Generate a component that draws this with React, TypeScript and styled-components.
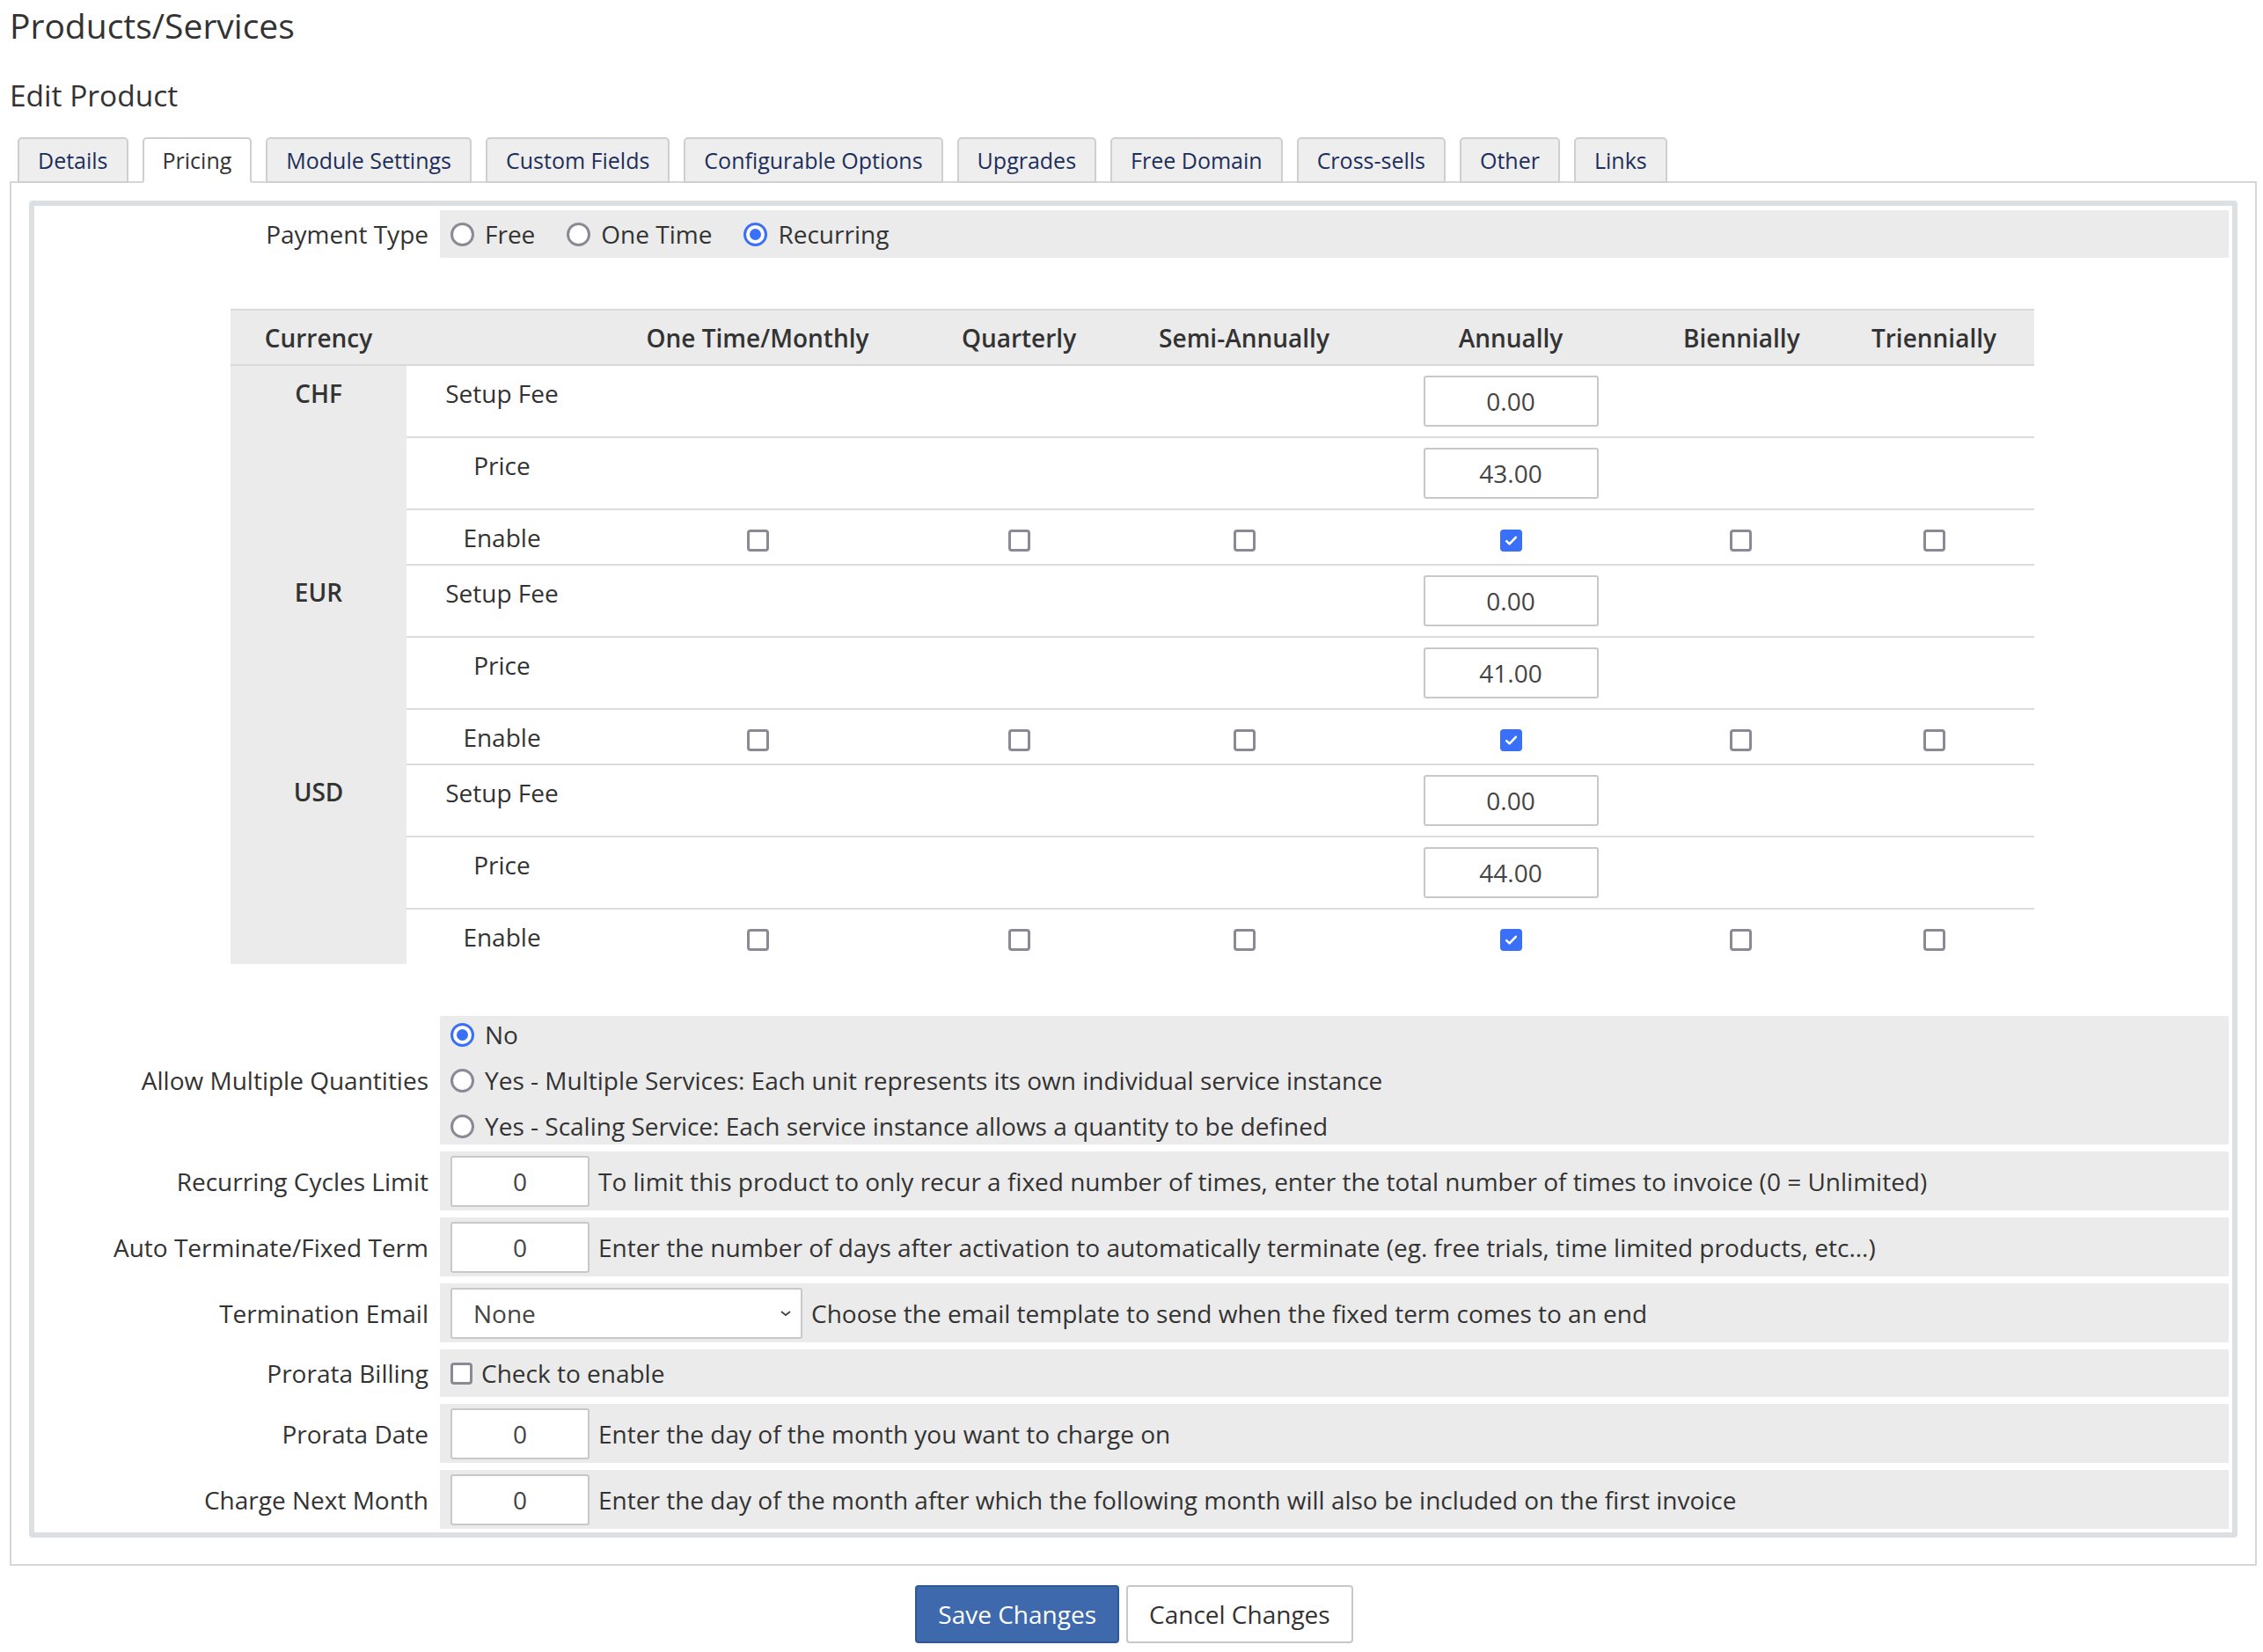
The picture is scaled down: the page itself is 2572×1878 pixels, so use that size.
import React from "react";
import styled, { createGlobalStyle } from "styled-components";

const Global = createGlobalStyle`
  body { margin: 0; background: #fff; font-family: "Open Sans", "Noto Sans", sans-serif; color: #333; }
  * { box-sizing: border-box; }
`;

const Page = styled.div`padding: 0 9px 0 11px; width: 2572px;`;
const H1 = styled.h1`font-weight: 400; font-size: 39px; margin: 0; padding-top: 1px; height: 60px; line-height: 56px; color: #333;`;
const H2 = styled.h2`font-weight: 400; font-size: 33.5px; margin: 0; margin-top: 20px; height: 76px; line-height: 56px; color: #333;`;

const Tabs = styled.div`display: flex; gap: 16px; padding-left: 9px; height: 52px; position: relative; z-index: 1;`;
const Tab = styled.div<{ $active?: boolean }>`
  height: 52px; padding: 0 21px; display: flex; align-items: center;
  font-size: 25px; color: ${p => (p.$active ? "#333" : "#1d2e5c")};
  background: ${p => (p.$active ? "#fff" : "#eeeeee")};
  border: 2px solid #cfcfcf; border-bottom: ${p => (p.$active ? "2px solid #fff" : "2px solid #cfcfcf")};
  border-radius: 5px 5px 0 0;
`;

const Outer = styled.div`border: 2px solid #d6d6d6; margin-top: -2px; padding: 20px 20px 30px 20px; width: 2554px;`;
const Inner = styled.div`border: 6px solid #dde0e3; border-radius: 4px; padding: 5px 4px 4px 2px;`;

const FormRow = styled.div<{ $h?: number; $mt?: number }>`
  display: flex; align-items: stretch; margin-top: ${p => p.$mt ?? 8}px; min-height: ${p => p.$h ?? 67}px;
`;
const Label = styled.div`width: 459px; flex: none; text-align: right; padding-right: 13px; font-size: 28px; display: flex; align-items: center; justify-content: flex-end; color: #333;`;
const Field = styled.div<{ $col?: boolean }>`
  flex: 1; background: #ebebeb; display: flex; ${p => (p.$col ? "flex-direction: column; justify-content: center; gap: 0;" : "align-items: center;")}
  padding: 0 12px; font-size: 28px; gap: 10px; color: #333;
`;
const Opt = styled.label`display: inline-flex; align-items: center; gap: 12px; margin-right: 26px; height: 42px;`;
const Radio = styled.span<{ $on?: boolean }>`
  width: 27px; height: 27px; border-radius: 50%; flex: none;
  border: 3px solid ${p => (p.$on ? "#3a6ff7" : "#8a8a94")};
  background: #fff; position: relative;
  &::after { content: ""; display: ${p => (p.$on ? "block" : "none")}; position: absolute; inset: 4px; border-radius: 50%; background: #3a6ff7; }
`;
const Check = styled.span<{ $on?: boolean }>`
  display: inline-flex; width: 25px; height: 25px; border-radius: 4px; flex: none; align-items: center; justify-content: center; vertical-align: middle;
  border: 3px solid ${p => (p.$on ? "#3a6ff7" : "#8a8a94")}; background: ${p => (p.$on ? "#3a6ff7" : "#fff")};
`;

const Spacer = styled.div<{ $h: number }>`height: ${p => p.$h}px;`;

const Table = styled.table`margin-left: 221px; width: 2050px; border-collapse: collapse; table-layout: fixed; font-size: 28px; color: #333;`;
const Th = styled.th<{ $pl?: number; $pr?: number }>`background: #ebebeb; font-weight: 600; height: 63px; border-top: 2px solid #d9d9d9; border-bottom: 2px solid #d9d9d9; text-align: center; padding: 0 ${p => p.$pr ?? 0}px 0 ${p => p.$pl ?? 0}px; white-space: nowrap;`;
const Cur = styled.td`background: #ebebeb; font-weight: 600; text-align: center; vertical-align: top; padding-top: 12px;`;
const Td = styled.td<{ $h: number; $last?: boolean; $pl?: number; $pr?: number }>`
  height: ${p => p.$h}px; text-align: center; vertical-align: middle;
  padding: 0 ${p => p.$pr ?? 0}px 0 ${p => p.$pl ?? 0}px;
  border-bottom: ${p => (p.$last ? "none" : "2px solid #dcdcdc")};
`;
const RowLabel = styled(Td)`vertical-align: top; padding-top: 12px; padding-right: 34px;`;
const EnLabel = styled(Td)`padding-right: 34px;`;
const Num = styled.div<{ $w?: number }>`
  display: inline-flex; align-items: center; justify-content: center; width: ${p => p.$w ?? 199}px; height: 58px;
  border: 2px solid #c8c8c8; border-radius: 3px; background: #fff; font-size: 28px; color: #444;
`;
const SelectBox = styled.div`
  width: 400px; height: 58px; border: 2px solid #c8c8c8; border-radius: 3px; background: #fff; flex: none;
  display: flex; align-items: center; justify-content: space-between; padding: 0 10px 0 24px; color: #444;
`;
const Buttons = styled.div`display: flex; justify-content: center; gap: 8px; margin-top: 22px; padding-left: 4px;`;
const Btn = styled.button<{ $primary?: boolean }>`
  height: 66px; padding: 0 24px; font-family: inherit; font-size: 28px; border-radius: 4px;
  background: ${p => (p.$primary ? "#3e6aad" : "#fff")}; color: ${p => (p.$primary ? "#fff" : "#333")};
  border: 2px solid ${p => (p.$primary ? "#2f5895" : "#c8c8c8")};
`;

const Tick = () => (
  <svg width="17" height="17" viewBox="0 0 16 16"><path d="M3 8.5l3.2 3.2L13 4.5" fill="none" stroke="#fff" strokeWidth="2.4" strokeLinecap="round" strokeLinejoin="round" /></svg>
);

const cols = [
  { t: "One Time/Monthly", w: 296, pl: 0, pr: 0 },
  { t: "Quarterly", w: 298, pl: 0, pr: 0 },
  { t: "Semi-Annually", w: 214, pl: 0, pr: 0 },
  { t: "Annually", w: 392, pl: 0, pr: 0 },
  { t: "Biennially", w: 157, pl: 0, pr: 26 },
  { t: "Triennially", w: 242, pl: 14, pr: 0 },
];
const data = [
  { c: "CHF", p: "43.00" },
  { c: "EUR", p: "41.00" },
  { c: "USD", p: "44.00" },
];

export default function App() {
  return (
    <Page>
      <Global />
      <H1>Products/Services</H1>
      <H2>Edit Product</H2>
      <Tabs>
        {["Details", "Pricing", "Module Settings", "Custom Fields", "Configurable Options", "Upgrades", "Free Domain", "Cross-sells", "Other", "Links"].map(t => (
          <Tab key={t} $active={t === "Pricing"}>{t}</Tab>
        ))}
      </Tabs>
      <Outer>
        <Inner>
          <FormRow $h={54} $mt={0}>
            <Label>Payment Type</Label>
            <Field>
              <Opt><Radio />Free</Opt>
              <Opt><Radio />One Time</Opt>
              <Opt><Radio $on />Recurring</Opt>
            </Field>
          </FormRow>
          <Spacer $h={58} />
          <Table>
            <colgroup>
              <col style={{ width: 200 }} /><col style={{ width: 251 }} />
              {cols.map(c => <col key={c.t} style={{ width: c.w }} />)}
            </colgroup>
            <thead>
              <tr>
                <Th>Currency</Th><Th />
                {cols.map(c => <Th key={c.t} $pl={c.pl} $pr={c.pr}>{c.t}</Th>)}
              </tr>
            </thead>
            <tbody>
              {data.map((d, di) => (
                <React.Fragment key={d.c}>
                  <tr>
                    <Cur rowSpan={3}>{d.c}</Cur>
                    <RowLabel $h={82}>Setup Fee</RowLabel>
                    {cols.map((c, i) => <Td key={c.t} $h={82} $pl={c.pl} $pr={c.pr}>{i === 3 && <Num>0.00</Num>}</Td>)}
                  </tr>
                  <tr>
                    <RowLabel $h={82}>Price</RowLabel>
                    {cols.map((c, i) => <Td key={c.t} $h={82} $pl={c.pl} $pr={c.pr}>{i === 3 && <Num>{d.p}</Num>}</Td>)}
                  </tr>
                  <tr>
                    <EnLabel $h={63} $last={di === 2}>Enable</EnLabel>
                    {cols.map((c, i) => (
                      <Td key={c.t} $h={63} $last={di === 2} $pl={c.pl} $pr={c.pr}>
                        <Check $on={i === 3}>{i === 3 && <Tick />}</Check>
                      </Td>
                    ))}
                  </tr>
                </React.Fragment>
              ))}
            </tbody>
          </Table>
          <Spacer $h={59} />
          <FormRow $h={134} $mt={0}>
            <Label>Allow Multiple Quantities</Label>
            <Field $col>
              <Opt><Radio $on />No</Opt>
              <Opt><Radio />Yes - Multiple Services: Each unit represents its own individual service instance</Opt>
              <Opt><Radio />Yes - Scaling Service: Each service instance allows a quantity to be defined</Opt>
            </Field>
          </FormRow>
          <FormRow>
            <Label>Recurring Cycles Limit</Label>
            <Field><Num $w={158}>0</Num>To limit this product to only recur a fixed number of times, enter the total number of times to invoice (0 = Unlimited)</Field>
          </FormRow>
          <FormRow>
            <Label>Auto Terminate/Fixed Term</Label>
            <Field><Num $w={158}>0</Num>Enter the number of days after activation to automatically terminate (eg. free trials, time limited products, etc...)</Field>
          </FormRow>
          <FormRow>
            <Label>Termination Email</Label>
            <Field><SelectBox>None<svg width="14" height="10" viewBox="0 0 14 10"><path d="M2 3l5 4 5-4" fill="none" stroke="#444" strokeWidth="1.8" /></svg></SelectBox>Choose the email template to send when the fixed term comes to an end</Field>
          </FormRow>
          <FormRow $h={54}>
            <Label>Prorata Billing</Label>
            <Field><Check />Check to enable</Field>
          </FormRow>
          <FormRow>
            <Label>Prorata Date</Label>
            <Field><Num $w={158}>0</Num>Enter the day of the month you want to charge on</Field>
          </FormRow>
          <FormRow>
            <Label>Charge Next Month</Label>
            <Field><Num $w={158}>0</Num>Enter the day of the month after which the following month will also be included on the first invoice</Field>
          </FormRow>
        </Inner>
      </Outer>
      <Buttons>
        <Btn $primary>Save Changes</Btn>
        <Btn>Cancel Changes</Btn>
      </Buttons>
    </Page>
  );
}
